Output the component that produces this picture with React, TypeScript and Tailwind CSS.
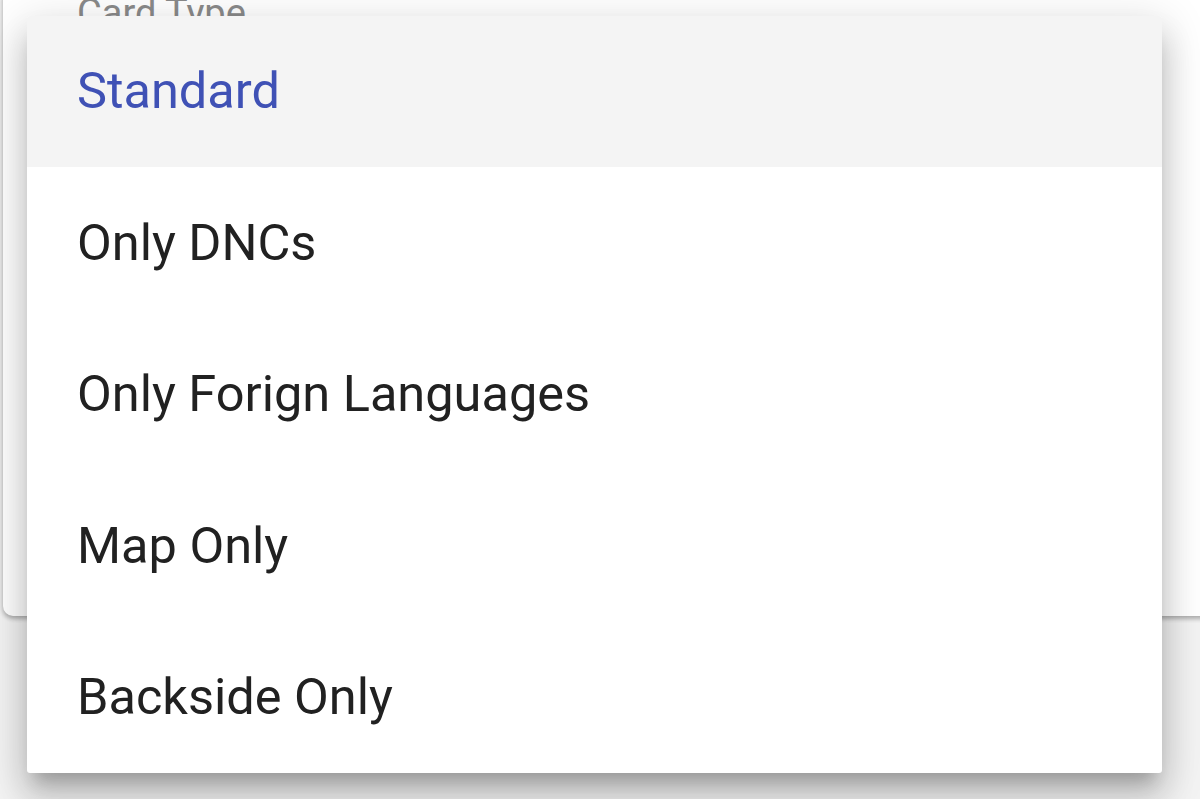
import React from "react";

const items = ["Standard", "Only DNCs", "Only Forign Languages", "Map Only", "Backside Only"];

export default function App() {
  return (
    <div
      className="relative w-[1200px] h-[799px] overflow-hidden bg-[#f3f3f3]"
      style={{ fontFamily: "Roboto, 'Noto Sans', sans-serif" }}
    >
      {/* background card */}
      <div className="ml-[3px] -mr-[20px] h-[622px] bg-white rounded-bl-[10px] shadow-[0_3px_4px_0_rgba(0,0,0,0.22),0_1px_6px_0_rgba(0,0,0,0.12)]">
        <div className="pl-[74px] -mt-[6px] text-[38px] leading-[38px] text-[#8a8a8a]">Card Type</div>
      </div>

      {/* select menu */}
      <div className="absolute left-[27px] top-[16px] w-[1135px] h-[757px] bg-white rounded-[3px] flex flex-col shadow-[0_16px_16px_-9px_rgba(0,0,0,0.2),0_25px_32px_3px_rgba(0,0,0,0.14),0_9px_44px_6px_rgba(0,0,0,0.12)]">
        {items.map((t, i) => (
          <div
            key={t}
            className={
              i === 0
                ? "flex-1 flex items-center pl-[50px] pb-[1px] text-[50.5px] text-[#3f51b5] bg-[#f4f4f4] rounded-t-[3px]"
                : "flex-1 flex items-center pl-[50px] pb-[1px] text-[50.5px] text-[#212121]"
            }
          >
            {t}
          </div>
        ))}
      </div>
    </div>
  );
}
